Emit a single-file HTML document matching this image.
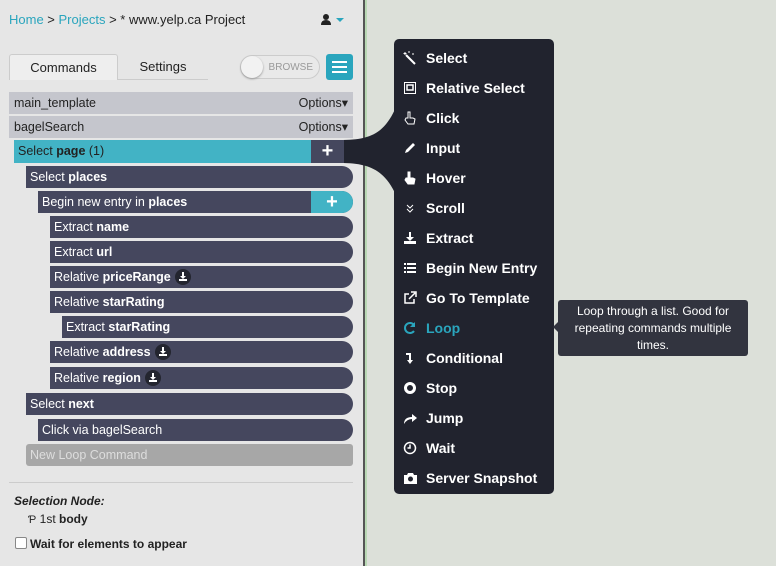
<!DOCTYPE html>
<html><head><style>
body{margin:0;width:776px;height:566px;background:#dce0d9;font-family:"Liberation Sans",sans-serif;position:relative;overflow:hidden}
#left{position:absolute;left:0;top:0;width:363px;height:566px;background:#e6e6e6;border-right:2px solid #555}
#gl{position:absolute;left:365px;top:0;width:2px;height:566px;background:#b9d8b4}
.a{position:absolute}
.crumb{left:9px;top:12px;font-size:13px;color:#222}
.crumb span{color:#2aa5bd}
.tab{top:54px;height:25px;font-size:13px;line-height:25px;text-align:center;color:#222}
.row{position:absolute;height:22px;line-height:22px;font-size:12.5px;color:#fff;background:#45475e;border-radius:0 11px 11px 0;padding-left:4px;box-sizing:border-box;right:423px}
.row b{font-weight:bold}
.hdr{position:absolute;left:9px;right:423px;height:22px;line-height:22px;background:#c5c6cd;font-size:12.5px;color:#222;padding:0 5px;box-sizing:border-box}
.hdr i{float:right;font-style:normal}
.dl{display:inline-block;width:16px;height:16px;border-radius:50%;background:#23252f;vertical-align:middle;margin-left:4px;position:relative;top:-1px}
.dl svg{position:absolute;left:4px;top:3px}
#menu{left:394px;top:39px;width:160px;height:455px;background:#21232e;border-radius:5px}
.mi{position:absolute;left:9px;height:20px;line-height:20px;color:#fff;font-weight:bold;font-size:14px}
.mi svg{position:absolute;left:0;top:3px}
.mi span{margin-left:23px}
</style></head><body>
<div id="left"></div><div id="gl"></div>
<div class="a crumb"><span>Home</span> &gt; <span>Projects</span> &gt; * www.yelp.ca Project</div>
<svg class="a" style="left:320px;top:13px" width="26" height="14"><circle cx="6" cy="4" r="3" fill="#222"/><path d="M1 12 Q1 7 6 7 Q11 7 11 12Z" fill="#222"/><path d="M16 5 L24 5 L20 9Z" fill="#2aa5bd"/></svg>
<div class="a tab" style="left:9px;width:107px;border:1px solid #ccc;border-bottom:none;background:#eee;border-radius:3px 3px 0 0">Commands</div>
<div class="a tab" style="left:118px;width:90px;border-bottom:1px solid #ccc">Settings</div>
<div class="a" style="left:240px;top:55px;width:80px;height:24px;border:1px solid #ccc;border-radius:13px;background:#e9e9e9;font-size:10px;color:#999;line-height:24px;text-align:right;padding-right:6px;box-sizing:border-box">BROWSE</div>
<div class="a" style="left:241px;top:56px;width:22px;height:22px;border-radius:50%;background:#f2f2f2;box-shadow:0 1px 2px #999"></div>
<div class="a" style="left:326px;top:54px;width:27px;height:26px;background:#2aa5bd;border-radius:3px"><div style="margin:7px 6px;height:2px;background:#fff;box-shadow:0 5px 0 #fff,0 10px 0 #fff"></div></div>
<div class="hdr" style="top:92px">main_template<i>Options&#9662;</i></div>
<div class="hdr" style="top:116px">bagelSearch<i>Options&#9662;</i></div>
<svg class="a" style="left:340px;top:95px" width="60" height="110"><path d="M0 45 C28 45 44 40 56 12 L56 100 C44 74 28 68 0 68Z" fill="#21232e"/></svg>
<div class="row" style="top:140px;left:14px;right:465px;height:23px;background:#42b3c5;color:#222;border-radius:0">Select <b>page</b> (1)</div>
<div class="a" style="left:311px;top:140px;width:33px;height:23px;background:#45475e;color:#fff;font-size:20px;font-weight:bold;text-align:center;line-height:23px">+</div>
<div class="row" style="top:166px;left:26px">Select <b>places</b></div>
<div class="row" style="top:191px;left:38px">Begin new entry in <b>places</b></div>
<div class="a" style="left:311px;top:191px;width:42px;height:22px;background:#42b3c5;border-radius:0 11px 11px 0;color:#fff;font-size:20px;font-weight:bold;text-align:center;line-height:22px">+</div>
<div class="row" style="top:216px;left:50px">Extract <b>name</b></div>
<div class="row" style="top:241px;left:50px">Extract <b>url</b></div>
<div class="row" style="top:266px;left:50px">Relative <b>priceRange</b><span class="dl"><svg width="8" height="9"><path d="M3 0h2v4h2l-3 3-3-3h2z M0 7h8v2H0z" fill="#fff"/></svg></span></div>
<div class="row" style="top:291px;left:50px">Relative <b>starRating</b></div>
<div class="row" style="top:316px;left:62px">Extract <b>starRating</b></div>
<div class="row" style="top:341px;left:50px">Relative <b>address</b><span class="dl"><svg width="8" height="9"><path d="M3 0h2v4h2l-3 3-3-3h2z M0 7h8v2H0z" fill="#fff"/></svg></span></div>
<div class="row" style="top:367px;left:50px">Relative <b>region</b><span class="dl"><svg width="8" height="9"><path d="M3 0h2v4h2l-3 3-3-3h2z M0 7h8v2H0z" fill="#fff"/></svg></span></div>
<div class="row" style="top:393px;left:26px">Select <b>next</b></div>
<div class="row" style="top:419px;left:38px">Click via bagelSearch</div>
<div class="row" style="top:444px;left:26px;background:#a7a7a7;color:#ddd;border-radius:3px">New Loop Command</div>
<div class="a" style="left:9px;top:482px;width:344px;height:1px;background:#ccc"></div>
<div class="a" style="left:14px;top:494px;font-size:12px;font-weight:bold;font-style:italic;color:#222">Selection Node:</div>
<div class="a" style="left:28px;top:512px;font-size:12px;color:#222"><span style="font-size:11px">&#420;</span> 1st <b>body</b></div>
<div class="a" style="left:15px;top:537px;font-size:12px;font-weight:bold;color:#222"><span style="display:inline-block;width:10px;height:10px;border:1px solid #888;border-radius:2px;background:#fff;vertical-align:-1px;margin-right:3px"></span>Wait for elements to appear</div>
<div class="a" id="menu">
<div class="mi" style="top:9px"><svg width="14" height="14"><path d="M3 4 L12 13" stroke="#fff" stroke-width="2"/><path d="M2 1v3M0.5 2.5h3M6 0v2M9 3h2" stroke="#fff" stroke-width="1"/></svg><span>Select</span></div>
<div class="mi" style="top:39px"><svg width="14" height="14"><rect x="1.5" y="1.5" width="11" height="11" fill="none" stroke="#fff"/><rect x="4" y="4" width="6" height="5" fill="none" stroke="#fff" stroke-width="1.5"/></svg><span>Relative Select</span></div>
<div class="mi" style="top:69px"><svg width="14" height="14"><path d="M5 1v6H3l-1 2 3 4h6l1-5-2-1H7V1z" fill="none" stroke="#fff"/></svg><span>Click</span></div>
<div class="mi" style="top:99px"><svg width="14" height="14"><path d="M2 12 L3 9 L10 2 L12 4 L5 11Z" fill="#fff"/></svg><span>Input</span></div>
<div class="mi" style="top:129px"><svg width="14" height="14"><path d="M5 1v6H3l-1 2 3 4h6l1-5-2-1H7V1z" fill="#fff" stroke="#fff"/></svg><span>Hover</span></div>
<div class="mi" style="top:159px"><svg width="14" height="14"><path d="M4 4l3 3 3-3M4 8l3 3 3-3" fill="none" stroke="#fff"/></svg><span>Scroll</span></div>
<div class="mi" style="top:189px"><svg width="14" height="14"><path d="M6 1h2v5h3l-4 4-4-4h3z M1 10h12v3H1z" fill="#fff"/></svg><span>Extract</span></div>
<div class="mi" style="top:219px"><svg width="14" height="14"><path d="M1 2h2v2H1zM1 6h2v2H1zM1 10h2v2H1zM4 2h9v2H4zM4 6h9v2H4zM4 10h9v2H4z" fill="#fff"/></svg><span>Begin New Entry</span></div>
<div class="mi" style="top:249px"><svg width="14" height="14"><path d="M6 3H2v9h9V8" fill="none" stroke="#fff" stroke-width="1.5"/><path d="M6 8L12 2M8 1h5v5" fill="none" stroke="#fff" stroke-width="1.5"/></svg><span>Go To Template</span></div>
<div class="mi" style="top:279px;color:#2aa5bd"><svg width="14" height="14"><path d="M11 4A5 5 0 1 0 11 10" fill="none" stroke="#2aa5bd" stroke-width="2"/><path d="M12 1v5H7z" fill="#2aa5bd"/></svg><span>Loop</span></div>
<div class="mi" style="top:309px"><svg width="14" height="14"><path d="M3 3h4v7" fill="none" stroke="#fff" stroke-width="2"/><path d="M4 9h6l-3 4z" fill="#fff"/></svg><span>Conditional</span></div>
<div class="mi" style="top:339px"><svg width="14" height="14"><circle cx="7" cy="7" r="4.5" fill="none" stroke="#fff" stroke-width="3"/></svg><span>Stop</span></div>
<div class="mi" style="top:369px"><svg width="14" height="14"><path d="M1 13 Q1 6 9 6V3l5 4-5 4V8Q4 8 1 13Z" fill="#fff"/></svg><span>Jump</span></div>
<div class="mi" style="top:399px"><svg width="14" height="14"><circle cx="7" cy="7" r="5.5" fill="none" stroke="#fff" stroke-width="1.5"/><path d="M7 3.5V7H4.5" fill="none" stroke="#fff" stroke-width="1.5"/></svg><span>Wait</span></div>
<div class="mi" style="top:429px"><svg width="16" height="14"><path d="M1 4h3l1-2h5l1 2h3v9H1z" fill="#fff"/><circle cx="7.5" cy="8" r="2.5" fill="#21232e"/></svg><span>Server Snapshot</span></div>
</div>
<div class="a" style="left:558px;top:300px;width:190px;height:56px;background:#32343f;border-radius:3px;color:#fff;font-size:12px;text-align:center;line-height:17px;padding-top:3px;box-sizing:border-box">Loop through a list. Good for repeating commands multiple times.</div>
<div class="a" style="left:553px;top:322px;width:0;height:0;border:5px solid transparent;border-right-color:#32343f;border-left:none"></div>
</body></html>
